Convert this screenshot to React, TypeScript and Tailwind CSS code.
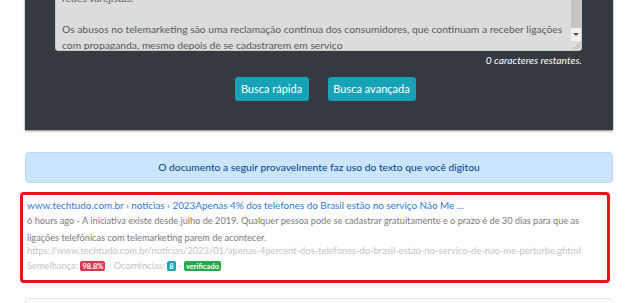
import React from "react";

export default function App() {
  return (
    <div className="w-[640px] h-[303px] overflow-hidden bg-white" style={{ fontFamily: "Lato, 'Noto Sans', sans-serif" }}>
      <div className="ml-[25px] w-[588px]">
        {/* dark panel */}
        <div className="-mt-[40px] bg-[#343a40] pt-[20px] pb-[29px] pl-[30px] pr-[31px] shadow-[0_1px_2px_rgba(0,0,0,0.5)]">
          <div className="relative h-[71px] overflow-hidden rounded-b-[3px] bg-[#dcdcdc] border border-[#c8c8c8]">
            <div className="absolute left-0 right-[11px] bottom-[-3px] pl-[6px] text-[10.3px] leading-[15.5px] text-[#555b61] whitespace-nowrap">
              <div>praticada por empresas de telemarketing contratadas por bancos e</div>
              <div>redes varejistas.</div>
              <div>&nbsp;</div>
              <div>Os abusos no telemarketing são uma reclamação contínua dos consumidores, que continuam a receber ligações</div>
              <div>com propaganda, mesmo depois de se cadastrarem em serviço</div>
            </div>
            {/* fake scrollbar */}
            <div className="absolute right-0 top-0 bottom-0 w-[10px] flex flex-col">
              <div className="h-[47px] bg-[#c4c4c4]"></div>
              <div className="h-[13px] bg-[#f1f1f1] flex items-center justify-center">
                <div className="w-0 h-0 border-l-[3px] border-r-[3px] border-t-[3px] border-l-transparent border-r-transparent border-t-[#505050]"></div>
              </div>
              <div className="flex-1 bg-[#dcdcdc] relative">
                <svg className="absolute right-[1px] bottom-[1px]" width="7" height="7" viewBox="0 0 7 7">
                  <line x1="1" y1="7" x2="7" y2="1" stroke="#9a9a9a" strokeWidth="0.8" />
                  <line x1="4" y1="7" x2="7" y2="4" stroke="#9a9a9a" strokeWidth="0.8" />
                </svg>
              </div>
            </div>
          </div>
          <div className="text-right italic text-white text-[10.3px] leading-[18px]">0 caracteres restantes.</div>
          <div className="mt-[8px] flex justify-center gap-[19px] pl-[13px]">
            <button className="h-[24px] w-[74px] rounded-[3px] bg-[#17a2b8] text-white text-[11px]">Busca rápida</button>
            <button className="h-[24px] w-[88px] rounded-[3px] bg-[#17a2b8] text-white text-[11px]">Busca avançada</button>
          </div>
        </div>

        {/* alert */}
        <div className="mt-[22px] h-[31px] rounded-[4px] bg-[#cce5ff] border border-[#b8daff] flex items-center justify-center text-[10.3px] text-[#004085]">
          O documento a seguir provavelmente faz uso do texto que você digitou
        </div>
      </div>

      {/* result */}
      <div className="mt-[9px] ml-[20px] w-[590px] h-[91px] border-[3px] border-[#e8131b] rounded-[4px] px-[4px] pt-[2px]">
        <div className="text-[9.9px] leading-[16px] text-[#2f7ad9] whitespace-nowrap">
          www.techtudo.com.br › noticias › 2023Apenas 4% dos telefones do Brasil estão no serviço Não Me ...
        </div>
        <div className="text-[9.2px] leading-[16.5px] text-[#7a7a7a]">
          <div className="whitespace-nowrap">6 hours ago - A iniciativa existe desde julho de 2019. Qualquer pessoa pode se cadastrar gratuitamente e o prazo é de 30 dias para que as</div>
          <div className="whitespace-nowrap">ligações telefônicas com telemarketing parem de acontecer.</div>
        </div>
        <div className="text-[9.35px] leading-[10px] text-[#c4c4c4] whitespace-nowrap">
          https://www.techtudo.com.br/noticias/2023/01/apenas-4percent-dos-telefones-do-brasil-estao-no-servico-de-nao-me-perturbe.ghtml
        </div>
        <div className="h-[20px] text-[9.3px] leading-[12px] text-[#c4c4c4] whitespace-nowrap flex items-center">
          <span>Semelhança:&nbsp;</span>
          <span className="rounded-[2px] bg-[#d9374b] text-white font-bold text-[7.5px] leading-[9px] px-[2px] py-[0.5px]">98.8%</span>
          <span>&nbsp;- Ocorrências:&nbsp;</span>
          <span className="rounded-[2px] bg-[#17a2b8] text-white font-bold text-[7.5px] leading-[9px] px-[2px] py-[0.5px]">8</span>
          <span>&nbsp;-&nbsp;</span>
          <span className="rounded-[2px] bg-[#28a745] text-white font-bold text-[7.5px] leading-[9px] px-[2px] py-[0.5px]">verificado</span>
        </div>
      </div>

      <div className="mt-[15px] ml-[25px] w-[588px] h-[40px] border border-[#e3e6e9] rounded-[4px]"></div>
    </div>
  );
}
